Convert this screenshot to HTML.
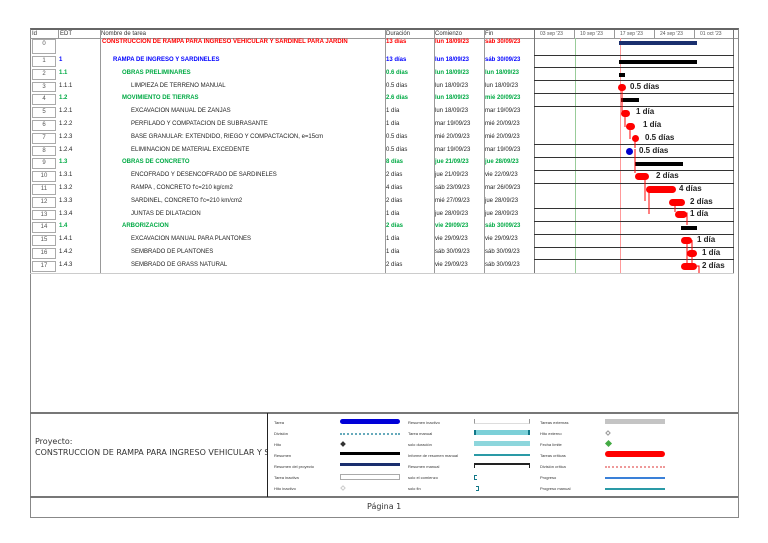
<!DOCTYPE html>
<html><head><meta charset="utf-8"><style>
*{margin:0;padding:0;box-sizing:border-box}
body{width:768px;height:543px;background:#fff;position:relative;overflow:hidden;font-family:"Liberation Sans",Arial,sans-serif;font-size:6px;color:#222}
.a{position:absolute;white-space:nowrap}
.hl{position:absolute;height:1px;background:#999}
.vl{position:absolute;width:1px;background:#999}
.r{position:absolute;left:30px;width:708px}
.r span{position:absolute;top:2px;white-space:nowrap}
.id{left:2px;width:24px;text-align:center;color:#555;border:1px solid #aaa;top:1px!important;height:calc(100% - 2px);line-height:9px}
.b{font-weight:bold}
.red{color:#f00}.blue{color:#00f}.grn{color:#0a4}
.bar{position:absolute;height:7px;border-radius:3.5px;background:#f00}
.sum{position:absolute;height:4px;background:#000}
.sum:before,.sum:after{content:"";position:absolute;top:2px;border-left:3px solid transparent;border-right:3px solid transparent;border-top:3px solid inherit}
.lab{position:absolute;font-weight:bold;font-size:8px;color:#222}
.lg{position:absolute;font-size:4px;color:#333}
.hd{position:absolute;top:31px;font-size:6px;color:#333}
</style></head><body>
<div class="a" style="left:30px;top:28px;width:709px;height:490px;border:1px solid #888;border-top:2px solid #666"></div>
<div class="hd" style="left:32px">Id</div>
<div class="hd" style="left:60px">EDT</div>
<div class="hd" style="left:101px">Nombre de tarea</div>
<div class="hd" style="left:386px">Duración</div>
<div class="hd" style="left:435px">Comienzo</div>
<div class="hd" style="left:485px">Fin</div>
<div class="hd" style="left:540px;font-size:5px;color:#555">03 sep '23</div>
<div class="hd" style="left:580px;font-size:5px;color:#555">10 sep '23</div>
<div class="hd" style="left:620px;font-size:5px;color:#555">17 sep '23</div>
<div class="hd" style="left:660px;font-size:5px;color:#555">24 sep '23</div>
<div class="hd" style="left:700px;font-size:5px;color:#555">01 oct '23</div>
<div class="hl" style="left:30px;top:38px;width:708px"></div>
<div class="vl" style="left:58px;top:30px;height:8px"></div>
<div class="vl" style="left:100px;top:30px;height:243px"></div>
<div class="vl" style="left:385px;top:30px;height:243px"></div>
<div class="vl" style="left:434px;top:30px;height:243px"></div>
<div class="vl" style="left:484px;top:30px;height:243px"></div>
<div class="vl" style="left:534px;top:30px;height:243px;background:#777"></div>
<div class="vl" style="left:574px;top:30px;height:8px"></div>
<div class="vl" style="left:614px;top:30px;height:8px"></div>
<div class="vl" style="left:654px;top:30px;height:8px"></div>
<div class="vl" style="left:694px;top:30px;height:8px"></div>
<div class="vl" style="left:733px;top:30px;height:243px;background:#777"></div>
<div class="vl" style="left:575px;top:38px;height:235px;background:#9c9"></div>
<div class="vl" style="left:620px;top:38px;height:235px;background:#f99"></div>
<div class="hl" style="left:30px;top:273px;width:704px;background:#ccc"></div>

<div class="hl" style="left:534px;top:55px;width:200px;background:#333"></div>
<div class="hl" style="left:534px;top:67px;width:200px;background:#333"></div>
<div class="hl" style="left:534px;top:80px;width:200px;background:#333"></div>
<div class="hl" style="left:534px;top:93px;width:200px;background:#333"></div>
<div class="hl" style="left:534px;top:106px;width:200px;background:#333"></div>
<div class="hl" style="left:534px;top:144px;width:200px;background:#333"></div>
<div class="hl" style="left:534px;top:157px;width:200px;background:#333"></div>
<div class="hl" style="left:534px;top:170px;width:200px;background:#333"></div>
<div class="hl" style="left:534px;top:183px;width:200px;background:#333"></div>
<div class="hl" style="left:534px;top:208px;width:200px;background:#333"></div>
<div class="hl" style="left:534px;top:221px;width:200px;background:#333"></div>
<div class="hl" style="left:534px;top:234px;width:200px;background:#333"></div>
<div class="hl" style="left:534px;top:247px;width:200px;background:#333"></div>
<div class="hl" style="left:534px;top:259px;width:200px;background:#333"></div>

<div class="r" style="top:38px;height:17px"><span class="id">0</span><span class="b red" style="left:72px;top:1px">CONSTRUCCION DE RAMPA PARA INGRESO VEHICULAR Y SARDINEL PARA JARDIN</span><span class="b red" style="left:356px;top:1px">13 días</span><span class="b red" style="left:405px;top:1px">lun 18/09/23</span><span class="b red" style="left:455px;top:1px">sáb 30/09/23</span></div>
<div class="r" style="top:55px;height:12.8px"><span class="id">1</span><span class="b blue" style="left:29px">1</span><span class="b blue" style="left:83px">RAMPA DE INGRESO Y SARDINELES</span><span class="b blue" style="left:356px">13 días</span><span class="b blue" style="left:405px">lun 18/09/23</span><span class="b blue" style="left:455px">sáb 30/09/23</span></div>
<div class="r" style="top:67.8px;height:12.8px"><span class="id">2</span><span class="b grn" style="left:29px">1.1</span><span class="b grn" style="left:92px">OBRAS PRELIMINARES</span><span class="b grn" style="left:356px">0.6 días</span><span class="b grn" style="left:405px">lun 18/09/23</span><span class="b grn" style="left:455px">lun 18/09/23</span></div>
<div class="r" style="top:80.6px;height:12.8px"><span class="id">3</span><span style="left:29px">1.1.1</span><span style="left:101px">LIMPIEZA DE TERRENO MANUAL</span><span style="left:356px">0.5 días</span><span style="left:405px">lun 18/09/23</span><span style="left:455px">lun 18/09/23</span></div>
<div class="r" style="top:93.4px;height:12.8px"><span class="id">4</span><span class="b grn" style="left:29px">1.2</span><span class="b grn" style="left:92px">MOVIMIENTO DE TIERRAS</span><span class="b grn" style="left:356px">2.6 días</span><span class="b grn" style="left:405px">lun 18/09/23</span><span class="b grn" style="left:455px">mié 20/09/23</span></div>
<div class="r" style="top:106.2px;height:12.8px"><span class="id">5</span><span style="left:29px">1.2.1</span><span style="left:101px">EXCAVACION MANUAL DE ZANJAS</span><span style="left:356px">1 día</span><span style="left:405px">lun 18/09/23</span><span style="left:455px">mar 19/09/23</span></div>
<div class="r" style="top:119px;height:12.8px"><span class="id">6</span><span style="left:29px">1.2.2</span><span style="left:101px">PERFILADO Y COMPATACION DE SUBRASANTE</span><span style="left:356px">1 día</span><span style="left:405px">mar 19/09/23</span><span style="left:455px">mié 20/09/23</span></div>
<div class="r" style="top:131.8px;height:12.8px"><span class="id">7</span><span style="left:29px">1.2.3</span><span style="left:101px">BASE GRANULAR: EXTENDIDO, RIEGO Y COMPACTACION, e=15cm</span><span style="left:356px">0.5 días</span><span style="left:405px">mié 20/09/23</span><span style="left:455px">mié 20/09/23</span></div>
<div class="r" style="top:144.6px;height:12.8px"><span class="id">8</span><span style="left:29px">1.2.4</span><span style="left:101px">ELIMINACION DE MATERIAL EXCEDENTE</span><span style="left:356px">0.5 días</span><span style="left:405px">mar 19/09/23</span><span style="left:455px">mar 19/09/23</span></div>
<div class="r" style="top:157.4px;height:12.8px"><span class="id">9</span><span class="b grn" style="left:29px">1.3</span><span class="b grn" style="left:92px">OBRAS DE CONCRETO</span><span class="b grn" style="left:356px">8 días</span><span class="b grn" style="left:405px">jue 21/09/23</span><span class="b grn" style="left:455px">jue 28/09/23</span></div>
<div class="r" style="top:170.2px;height:12.8px"><span class="id">10</span><span style="left:29px">1.3.1</span><span style="left:101px">ENCOFRADO Y DESENCOFRADO DE SARDINELES</span><span style="left:356px">2 días</span><span style="left:405px">jue 21/09/23</span><span style="left:455px">vie 22/09/23</span></div>
<div class="r" style="top:183px;height:12.8px"><span class="id">11</span><span style="left:29px">1.3.2</span><span style="left:101px">RAMPA , CONCRETO f'c=210 kg/cm2</span><span style="left:356px">4 días</span><span style="left:405px">sáb 23/09/23</span><span style="left:455px">mar 26/09/23</span></div>
<div class="r" style="top:195.8px;height:12.8px"><span class="id">12</span><span style="left:29px">1.3.3</span><span style="left:101px">SARDINEL, CONCRETO f'c=210 km/cm2</span><span style="left:356px">2 días</span><span style="left:405px">mié 27/09/23</span><span style="left:455px">jue 28/09/23</span></div>
<div class="r" style="top:208.6px;height:12.8px"><span class="id">13</span><span style="left:29px">1.3.4</span><span style="left:101px">JUNTAS DE DILATACION</span><span style="left:356px">1 día</span><span style="left:405px">jue 28/09/23</span><span style="left:455px">jue 28/09/23</span></div>
<div class="r" style="top:221.4px;height:12.8px"><span class="id">14</span><span class="b grn" style="left:29px">1.4</span><span class="b grn" style="left:92px">ARBORIZACION</span><span class="b grn" style="left:356px">2 días</span><span class="b grn" style="left:405px">vie 29/09/23</span><span class="b grn" style="left:455px">sáb 30/09/23</span></div>
<div class="r" style="top:234.2px;height:12.8px"><span class="id">15</span><span style="left:29px">1.4.1</span><span style="left:101px">EXCAVACION MANUAL PARA PLANTONES</span><span style="left:356px">1 día</span><span style="left:405px">vie 29/09/23</span><span style="left:455px">vie 29/09/23</span></div>
<div class="r" style="top:247px;height:12.8px"><span class="id">16</span><span style="left:29px">1.4.2</span><span style="left:101px">SEMBRADO DE PLANTONES</span><span style="left:356px">1 día</span><span style="left:405px">sáb 30/09/23</span><span style="left:455px">sáb 30/09/23</span></div>
<div class="r" style="top:259.8px;height:12.8px"><span class="id">17</span><span style="left:29px">1.4.3</span><span style="left:101px">SEMBRADO DE GRASS NATURAL</span><span style="left:356px">2 días</span><span style="left:405px">vie 29/09/23</span><span style="left:455px">sáb 30/09/23</span></div>

<!-- gantt bars -->
<div class="sum" style="left:619px;top:41px;width:78px;background:#1a2f6e"></div>
<div class="sum" style="left:619px;top:60px;width:78px"></div>
<div class="sum" style="left:619px;top:73px;width:6px"></div>
<div class="bar" style="left:618px;top:84px;width:8px"></div><div class="lab" style="left:630px;top:82px">0.5 días</div>
<div class="sum" style="left:621px;top:98px;width:18px"></div>
<div class="bar" style="left:621px;top:110px;width:9px"></div><div class="lab" style="left:636px;top:107px">1 día</div>
<div class="bar" style="left:626px;top:123px;width:9px"></div><div class="lab" style="left:643px;top:120px">1 día</div>
<div class="bar" style="left:632px;top:135px;width:7px"></div><div class="lab" style="left:645px;top:133px">0.5 días</div>
<div class="bar" style="left:626px;top:148px;width:7px;background:#00c"></div><div class="lab" style="left:639px;top:146px">0.5 días</div>
<div class="sum" style="left:635px;top:162px;width:48px"></div>
<div class="bar" style="left:635px;top:173px;width:14px"></div><div class="lab" style="left:656px;top:171px">2 días</div>
<div class="bar" style="left:646px;top:186px;width:30px"></div><div class="lab" style="left:679px;top:184px">4 días</div>
<div class="bar" style="left:669px;top:199px;width:16px"></div><div class="lab" style="left:690px;top:197px">2 días</div>
<div class="bar" style="left:675px;top:211px;width:12px"></div><div class="lab" style="left:690px;top:209px">1 día</div>
<div class="sum" style="left:681px;top:226px;width:16px"></div>
<div class="bar" style="left:681px;top:237px;width:11px"></div><div class="lab" style="left:697px;top:235px">1 día</div>
<div class="bar" style="left:687px;top:250px;width:10px"></div><div class="lab" style="left:702px;top:248px">1 día</div>
<div class="bar" style="left:681px;top:263px;width:16px"></div><div class="lab" style="left:702px;top:261px">2 días</div>
<svg class="a" style="left:534px;top:37px" width="200" height="236"><g stroke="#f00" stroke-width="1" fill="none">
<path d="M88 51V76"/><path d="M91 76V90"/><path d="M96 90V102"/><path d="M101 102V111"/><path d="M101 112v24"/><path d="M111 139v25"/><path d="M115 150v27"/><path d="M139 163h2V175"/><path d="M150 176h3V188"/><path d="M153 201v27"/><path d="M158 203v25"/><path d="M163 229h2v8"/></g></svg>

<!-- legend area -->
<div class="hl" style="left:30px;top:412px;width:708px;height:2px;background:#777"></div>
<div class="hl" style="left:30px;top:496px;width:708px;height:2px;background:#777"></div>
<div class="vl" style="left:267px;top:413px;height:84px;background:#222"></div>
<div class="a" style="left:35px;top:437px;font-size:8px;color:#333;font-family:'DejaVu Sans',sans-serif">Proyecto:</div>
<div class="a" style="left:35px;top:448px;font-size:8px;color:#333;font-family:'DejaVu Sans',sans-serif;width:232px;overflow:hidden">CONSTRUCCION DE RAMPA PARA INGRESO VEHICULAR Y SARDINEL</div>
<div class="a" style="left:367px;top:502px;font-size:8px;color:#333;font-family:'DejaVu Sans',sans-serif">Página 1</div>

<div class="lg" style="left:274px;top:420px">Tarea</div>
<div class="lg" style="left:274px;top:431px">División</div>
<div class="lg" style="left:274px;top:442px">Hito</div>
<div class="lg" style="left:274px;top:453px">Resumen</div>
<div class="lg" style="left:274px;top:464px">Resumen del proyecto</div>
<div class="lg" style="left:274px;top:475px">Tarea inactiva</div>
<div class="lg" style="left:274px;top:486px">Hito inactivo</div>
<div class="a" style="left:340px;top:419px;width:60px;height:5px;background:#0000d8;border-radius:3px"></div>
<div class="a" style="left:340px;top:433px;width:60px;height:2px;border-top:2px dotted #6ab"></div>
<div class="a" style="left:341px;top:442px;width:4px;height:4px;background:#333;transform:rotate(45deg)"></div>
<div class="a" style="left:340px;top:452px;width:60px;height:3px;background:#000"></div>
<div class="a" style="left:340px;top:463px;width:60px;height:3px;background:#1a2f6e"></div>
<div class="a" style="left:340px;top:474px;width:60px;height:6px;border:1px solid #aaa"></div>
<div class="a" style="left:341px;top:486px;width:4px;height:4px;border:1px solid #ccc;transform:rotate(45deg)"></div>

<div class="lg" style="left:408px;top:420px">Resumen inactivo</div>
<div class="lg" style="left:408px;top:431px">Tarea manual</div>
<div class="lg" style="left:408px;top:442px">solo duración</div>
<div class="lg" style="left:408px;top:453px">Informe de resumen manual</div>
<div class="lg" style="left:408px;top:464px">Resumen manual</div>
<div class="lg" style="left:408px;top:475px">solo el comienzo</div>
<div class="lg" style="left:408px;top:486px">solo fin</div>
<div class="a" style="left:474px;top:419px;width:56px;height:5px;border:1px solid #999;border-top:none;border-bottom:1px solid #ddd"></div>
<div class="a" style="left:474px;top:430px;width:56px;height:5px;background:#7cd0d8;border-left:2px solid #178;border-right:2px solid #178"></div>
<div class="a" style="left:474px;top:441px;width:56px;height:5px;background:#8dd6dc"></div>
<div class="a" style="left:474px;top:454px;width:56px;height:2px;background:#2a9aa6"></div>
<div class="a" style="left:474px;top:463px;width:56px;height:5px;border:1px solid #222;border-bottom:none;border-top-width:2px"></div>
<div class="a" style="left:474px;top:475px;width:3px;height:5px;border:1px solid #178;border-right:none"></div>
<div class="a" style="left:476px;top:486px;width:3px;height:5px;border:1px solid #178;border-left:none"></div>

<div class="lg" style="left:540px;top:420px">Tareas externas</div>
<div class="lg" style="left:540px;top:431px">Hito externo</div>
<div class="lg" style="left:540px;top:442px">Fecha límite</div>
<div class="lg" style="left:540px;top:453px">Tareas críticas</div>
<div class="lg" style="left:540px;top:464px">División crítica</div>
<div class="lg" style="left:540px;top:475px">Progreso</div>
<div class="lg" style="left:540px;top:486px">Progreso manual</div>
<div class="a" style="left:605px;top:419px;width:60px;height:5px;background:#c4c4c4"></div>
<div class="a" style="left:606px;top:431px;width:4px;height:4px;border:1px solid #999;transform:rotate(45deg)"></div>
<div class="a" style="left:606px;top:441px;width:5px;height:5px;background:#4a4;transform:rotate(45deg)"></div>
<div class="a" style="left:605px;top:451px;width:60px;height:6px;background:#f00;border-radius:3px"></div>
<div class="a" style="left:605px;top:466px;width:60px;height:2px;border-top:2px dotted #e99"></div>
<div class="a" style="left:605px;top:477px;width:60px;height:2px;background:#3a80d8"></div>
<div class="a" style="left:605px;top:488px;width:60px;height:2px;background:#2a9aa6"></div>
</body></html>
